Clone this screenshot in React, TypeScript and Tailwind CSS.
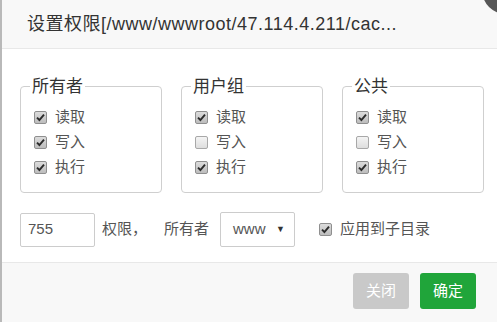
import { useState } from 'react'

function Check({ checked }: { checked: boolean }) {
  return (
    <span
      className={
        'w-[13px] h-[13px] shrink-0 rounded-[2px] border flex items-center justify-center ' +
        (checked
          ? 'border-[#8f8f8f] bg-linear-to-b from-[#dcdcdc] to-[#bdbdbd]'
          : 'border-[#a8a8a8] bg-linear-to-b from-[#f4f4f4] to-[#dedede]')
      }
    >
      {checked && (
        <svg width="9" height="9" viewBox="0 0 9 9">
          <path d="M1 4.6 L3.4 7 L8 1.6" fill="none" stroke="#2b2b2b" strokeWidth="1.9" />
        </svg>
      )}
    </span>
  )
}

const groups = [
  { title: '所有者', perms: [true, true, true] },
  { title: '用户组', perms: [true, false, true] },
  { title: '公共', perms: [true, false, true] },
]
const names = ['读取', '写入', '执行']

export default function App() {
  const [mode] = useState('755')

  return (
    <div className="relative w-[497px] h-[322px] overflow-hidden bg-white border-l-2 border-[#b9b9b9] font-['Liberation_Sans','Noto_Sans_CJK_SC',sans-serif]">
      {/* close button peeking in from the corner */}
      <span className="absolute left-[480px] top-[-34px] w-[48px] h-[48px] rounded-full bg-[#575757]" />

      <div className="h-[49px] bg-[#f8f8f8] border-b border-[#e8e8e8] pl-[25px] flex items-center text-[18px] tracking-[0.5px] text-[#333]">
        设置权限[/www/wwwroot/47.114.4.211/cac...
      </div>

      <div className="h-[213px] pl-[18px] pt-[29px]">
        <div className="flex gap-[19px]">
          {groups.map((g) => (
            <fieldset
              key={g.title}
              className="w-[142px] h-[115px] border border-[#cfcfcf] rounded-[4px] pl-[13px] pt-[10px]"
            >
              <legend className="ml-[-4px] px-[2px] text-[17px] leading-[17px] text-[#333]">{g.title}</legend>
              {names.map((n, i) => (
                <div key={n} className="h-[25px] flex items-center gap-[8px] text-[15px] text-[#555]">
                  <Check checked={g.perms[i]} />
                  <span>{n}</span>
                </div>
              ))}
            </fieldset>
          ))}
        </div>

        <div className="mt-[19px] h-[35px] flex items-center text-[15px] text-[#555]">
          <div className="w-[75px] h-[34px] border border-[#ccc] rounded-[2px] pl-[7px] flex items-center text-[#555]">
            {mode}
          </div>
          <span className="ml-[7px]">权限，</span>
          <span className="ml-[17px]">所有者</span>
          <div className="ml-[11px] w-[75px] h-[35px] border border-[#ccc] rounded-[2px] pl-[12px] pr-[9px] flex items-center justify-between">
            <span>www</span>
            <span className="text-[9px] text-[#333]">▼</span>
          </div>
          <div className="ml-[24px] flex items-center gap-[8px]">
            <Check checked />
            <span>应用到子目录</span>
          </div>
        </div>
      </div>

      <div className="h-[60px] bg-[#f8f8f8] border-t border-[#e8e8e8] flex justify-end items-start pt-[10px] pr-[21px] gap-[11px]">
        <button className="w-[56px] h-[36px] rounded-[3px] bg-[#c9c9c9] text-white text-[15px]">关闭</button>
        <button className="w-[56px] h-[36px] rounded-[3px] bg-[#20a53a] text-white text-[15px]">确定</button>
      </div>
    </div>
  )
}
